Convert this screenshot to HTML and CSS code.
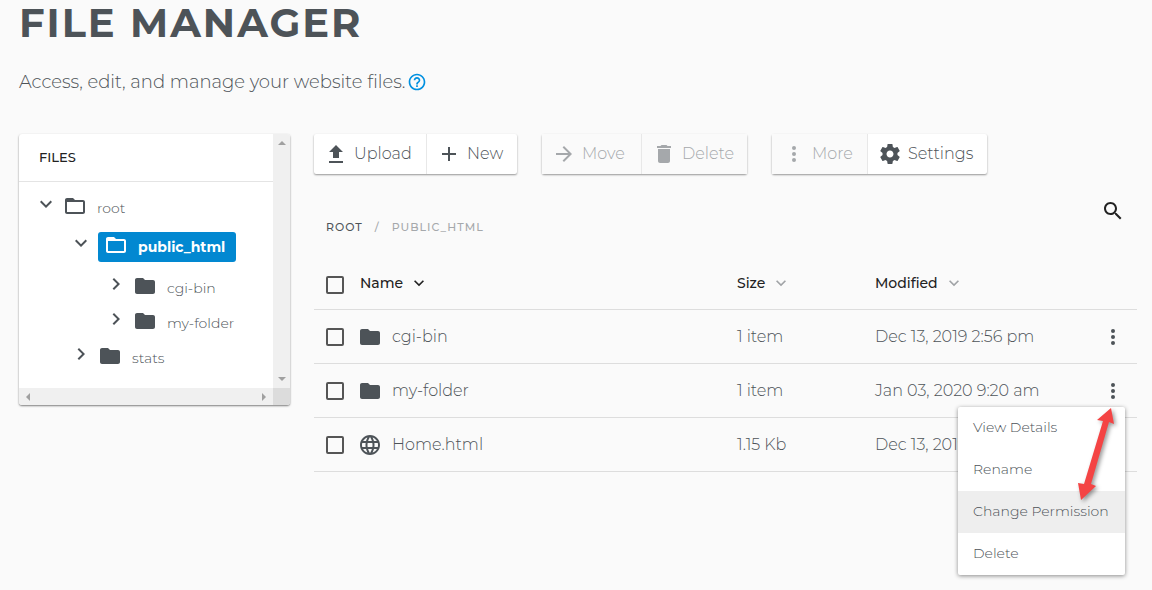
FILE: index.html
```html
<!DOCTYPE html>
<html lang="en">
<head>
<meta charset="utf-8">
<title>File Manager</title>
<link rel="stylesheet" href="styles.css">
</head>
<body>
<svg class="sprite" aria-hidden="true">
  <symbol id="folder" viewBox="0 0 24 24"><path d="M10 4H4c-1.100 0-1.990.900-1.990 2L2 18c0 1.100.9 2 2 2h16c1.100 0 2-.9 2-2V8c0-1.100-.9-2-2-2h-8l-2-2z"/></symbol>
  <symbol id="folder-open" viewBox="0 0 24 24"><path d="M20 6h-8l-2-2H4c-1.100 0-1.990.9-1.990 2L2 18c0 1.100.9 2 2 2h16c1.100 0 2-.9 2-2V8c0-1.100-.9-2-2-2zm0 12H4V8h16v10z"/></symbol>
  <symbol id="down" viewBox="0 0 24 24"><path d="M7.410 8.590 12 13.170l4.590-4.580L18 10l-6 6-6-6z"/></symbol>
  <symbol id="right" viewBox="0 0 24 24"><path d="M8.590 16.590 13.170 12 8.590 7.410 10 6l6 6-6 6z"/></symbol>
  <symbol id="dots" viewBox="0 0 24 24"><circle cx="12" cy="6" r="2"/><circle cx="12" cy="12" r="2"/><circle cx="12" cy="18" r="2"/></symbol>
</svg>
<main class="page">
  <h1 class="title">FILE MANAGER</h1>
  <p class="intro">Access, edit, and manage your website files.<a class="help" href="#" aria-label="Help"><svg class="help-icon" viewBox="0 0 24 24"><path d="M11 18h2v-2h-2v2zm1-16C6.480 2 2 6.480 2 12s4.480 10 10 10 10-4.480 10-10S17.520 2 12 2zm0 18c-4.410 0-8-3.590-8-8s3.590-8 8-8 8 3.590 8 8-3.590 8-8 8zm0-14c-2.210 0-4 1.790-4 4h2c0-1.100.9-2 2-2s2 .9 2 2c0 2-3 1.750-3 5h2c0-2.250 3-2.500 3-5 0-2.210-1.790-4-4-4z"/></svg></a></p>
  <div class="columns">
    <aside class="files">
      <div class="files-body">
        <h2 class="files-title">FILES</h2>
        <ul class="tree">
          <li class="node"><svg class="chev"><use href="#down"/></svg><a class="entry" href="#"><svg class="tree-folder"><use href="#folder-open"/></svg>root</a></li>
          <li class="node node-selected level-1"><svg class="chev"><use href="#down"/></svg><a class="entry entry-selected" href="#"><svg class="tree-folder"><use href="#folder-open"/></svg>public_html</a></li>
          <li class="node level-2"><svg class="chev"><use href="#right"/></svg><a class="entry" href="#"><svg class="tree-folder"><use href="#folder"/></svg>cgi-bin</a></li>
          <li class="node level-2"><svg class="chev"><use href="#right"/></svg><a class="entry" href="#"><svg class="tree-folder"><use href="#folder"/></svg>my-folder</a></li>
          <li class="node level-1"><svg class="chev"><use href="#right"/></svg><a class="entry" href="#"><svg class="tree-folder"><use href="#folder"/></svg>stats</a></li>
        </ul>
      </div>
      <div class="bar bar-y"><svg class="tip" viewBox="0 0 8 8"><path d="M0 6h8L4 2z"/></svg><svg class="tip" viewBox="0 0 8 8"><path d="M0 2h8L4 6z"/></svg></div>
      <div class="bar bar-x"><svg class="tip" viewBox="0 0 8 8"><path d="M6 0v8L2 4z"/></svg><svg class="tip" viewBox="0 0 8 8"><path d="M2 0v8l4-4z"/></svg></div>
      <div class="corner"></div>
    </aside>
    <section class="content">
      <div class="toolbar">
        <div class="group">
          <button class="tool tool-upload"><svg class="icon" viewBox="0 0 24 24"><path d="M9 16h6v-6h4l-7-7-7 7h4zM5 19h14v2H5z"/></svg>Upload</button>
          <button class="tool tool-new"><svg class="icon" viewBox="0 0 24 24"><path d="M19 13h-6v6h-2v-6H5v-2h6V5h2v6h6z"/></svg>New</button>
        </div>
        <div class="group">
          <button class="tool tool-move" disabled><svg class="icon" viewBox="0 0 24 24"><path d="m12 4-1.410 1.410L16.170 11H4v2h12.170l-5.580 5.590L12 20l8-8z"/></svg>Move</button>
          <button class="tool tool-delete" disabled><svg class="icon" viewBox="0 0 24 24"><path d="M6 19c0 1.100.9 2 2 2h8c1.100 0 2-.9 2-2V7H6v12zM19 4h-3.500l-1-1h-5l-1 1H5v2h14z"/></svg>Delete</button>
        </div>
        <div class="group">
          <button class="tool tool-more" disabled><svg class="icon"><use href="#dots"/></svg>More</button>
          <button class="tool tool-settings"><svg class="icon" viewBox="0 0 24 24"><path d="M19.430 12.980c.04-.32.07-.64.07-.98s-.03-.66-.07-.98l2.110-1.650c.19-.15.24-.42.12-.64l-2-3.460c-.12-.22-.39-.3-.61-.22l-2.490 1c-.52-.4-1.080-.73-1.690-.98l-.38-2.650C14.460 2.180 14.250 2 14 2h-4c-.25 0-.46.18-.49.42l-.38 2.650c-.61.25-1.170.59-1.690.98l-2.490-1c-.23-.09-.49 0-.61.22l-2 3.460c-.13.22-.07.49.12.64l2.110 1.650c-.04.32-.07.65-.07.98s.03.66.07.98l-2.110 1.650c-.19.15-.24.42-.12.64l2 3.460c.12.22.39.3.61.22l2.490-1c.52.4 1.080.73 1.690.98l.38 2.650c.03.24.24.42.49.42h4c.25 0 .46-.18.49-.42l.38-2.650c.61-.25 1.170-.59 1.690-.98l2.490 1c.23.09.49 0 .61-.22l2-3.460c.12-.22.07-.49-.12-.64l-2.110-1.650zM12 15.500c-1.930 0-3.500-1.570-3.500-3.500s1.570-3.500 3.500-3.500 3.500 1.570 3.500 3.500-1.570 3.500-3.500 3.500z"/></svg>Settings</button>
        </div>
      </div>
      <div class="path-row">
        <nav class="path"><a class="path-link" href="#">ROOT</a><span>/</span><span>PUBLIC_HTML</span></nav>
        <button class="plain search" aria-label="Search"><svg class="icon" viewBox="0 0 24 24"><path d="M15.500 14h-.79l-.28-.27C15.410 12.590 16 11.110 16 9.500 16 5.910 13.090 3 9.500 3S3 5.910 3 9.500 5.910 16 9.500 16c1.610 0 3.090-.59 4.230-1.570l.27.28v.79l5 4.990L20.490 19l-4.990-5zm-6 0C7.010 14 5 11.990 5 9.500S7.010 5 9.500 5 14 7.010 14 9.500 11.990 14 9.500 14z"/></svg></button>
      </div>
      <table class="list">
        <colgroup><col class="col-check"><col><col class="col-size"><col class="col-date"><col class="col-act"></colgroup>
        <thead>
          <tr>
            <th><input class="check" type="checkbox" aria-label="Select all"></th>
            <th><button class="plain sort">Name<svg class="sort-icon sort-active"><use href="#down"/></svg></button></th>
            <th><button class="plain sort">Size<svg class="sort-icon"><use href="#down"/></svg></button></th>
            <th><button class="plain sort">Modified<svg class="sort-icon"><use href="#down"/></svg></button></th>
            <th></th>
          </tr>
        </thead>
        <tbody>
          <tr>
            <td><input class="check" type="checkbox" aria-label="Select cgi-bin"></td>
            <td><a class="name" href="#"><svg class="icon"><use href="#folder"/></svg>cgi-bin</a></td>
            <td>1 item</td><td>Dec 13, 2019 2:56 pm</td>
            <td><button class="plain" aria-label="Actions for cgi-bin"><svg class="icon"><use href="#dots"/></svg></button></td>
          </tr>
          <tr>
            <td><input class="check" type="checkbox" aria-label="Select my-folder"></td>
            <td><a class="name" href="#"><svg class="icon"><use href="#folder"/></svg>my-folder</a></td>
            <td>1 item</td><td>Jan 03, 2020 9:20 am</td>
            <td class="menu-cell"><button class="plain" aria-label="Actions for my-folder"><svg class="icon"><use href="#dots"/></svg></button>
              <div class="menu">
                <button class="menu-item">View Details</button>
                <button class="menu-item">Rename</button>
                <button class="menu-item menu-current">Change Permission</button>
                <button class="menu-item">Delete</button>
                <svg class="arrow" viewBox="0 0 40 100" aria-hidden="true"><path d="M33 2l3 16-5-2-18 62 5 2L3 94 0 77l6 1L25 15l-6-1z"/></svg>
              </div>
            </td>
          </tr>
          <tr>
            <td><input class="check" type="checkbox" aria-label="Select Home.html"></td>
            <td><a class="name" href="#"><svg class="icon" viewBox="0 0 24 24"><path d="M11.990 2C6.470 2 2 6.480 2 12s4.470 10 9.990 10C17.520 22 22 17.520 22 12S17.520 2 11.990 2zm6.930 6h-2.950c-.32-1.250-.78-2.450-1.380-3.560 1.840.63 3.370 1.910 4.330 3.560zM12 4.040c.83 1.200 1.480 2.530 1.910 3.960h-3.820c.43-1.430 1.080-2.760 1.910-3.960zM4.260 14C4.100 13.360 4 12.690 4 12s.1-1.360.26-2h3.380c-.08.66-.14 1.320-.14 2s.06 1.340.14 2H4.260zm.82 2h2.950c.32 1.250.78 2.450 1.380 3.560-1.840-.63-3.370-1.900-4.330-3.560zm2.950-8H5.080c.96-1.660 2.490-2.930 4.330-3.560C8.810 5.550 8.350 6.750 8.030 8zM12 19.960c-.83-1.200-1.480-2.530-1.910-3.960h3.820c-.43 1.430-1.080 2.760-1.910 3.960zM14.340 14H9.660c-.09-.66-.16-1.320-.16-2s.07-1.350.16-2h4.680c.09.65.16 1.320.16 2s-.07 1.340-.16 2zm.25 5.560c.6-1.110 1.060-2.310 1.380-3.560h2.950c-.96 1.650-2.490 2.930-4.330 3.560zM16.360 14c.08-.66.14-1.320.14-2s-.06-1.340-.14-2h3.380c.16.64.26 1.310.26 2s-.1 1.360-.26 2h-3.380z"/></svg>Home.html</a></td>
            <td>1.15 Kb</td><td>Dec 13, 2019 2:56 pm</td>
            <td></td>
          </tr>
        </tbody>
      </table>
    </section>
  </div>
</main>
</body>
</html>
```
FILE: styles.css
```css
* { box-sizing: border-box; }
body {
  margin: 0;
  background: #fafafa;
  color: #4d5358;
  font: 300 16px/24px Montserrat, Inter, "Open Sans", sans-serif;
}
a { color: inherit; text-decoration: none; }
svg { fill: currentColor; flex: none; display: block; }
button { font: inherit; color: inherit; border: 0; background: none; cursor: pointer; }
.sprite { position: absolute; width: 0; height: 0; }
.page { min-height: 100vh; padding: 0 15px 16px 19px; }

.title { margin: 0; font-size: 40px; line-height: 46px; font-weight: 700; letter-spacing: 2px; }
.intro { margin: 23px 0 39px; display: flex; align-items: center; gap: 2px; font-size: 18px; line-height: 26px; }
.help { color: #0090e0; }
.help-icon { width: 20px; height: 20px; }

.columns { display: flex; align-items: flex-start; gap: 24px; }

.files {
  flex: none;
  width: 271px;
  display: grid;
  grid-template-columns: 1fr 17px;
  grid-template-rows: auto 17px;
  background: #fff;
  border-radius: 3px;
  overflow: hidden;
  box-shadow: 0 1px 2px rgba(0, 0, 0, .5);
}
.files-title {
  margin: 0;
  padding: 0 20px;
  border-bottom: 1px solid #e4e4e4;
  color: #222;
  font-size: 13px;
  line-height: 47px;
  font-weight: 500;
}
.tree { list-style: none; margin: 0; padding: 8px 0 13px 15px; font-size: 14px; }
.node { display: flex; align-items: center; gap: 5px; height: 35px; }
.node-selected { height: 45px; padding-bottom: 1px; }
.level-1 { padding-left: 35px; }
.level-2 { padding-left: 70px; }
.chev { width: 24px; height: 24px; margin-bottom: 8px; }
.entry { display: flex; align-items: center; gap: 10px; }
.tree-folder { width: 24px; height: 24px; margin-bottom: 4px; }
.entry-selected {
  height: 30px;
  padding: 0 11px 0 6px;
  border-radius: 3px;
  background: #0288d1;
  color: #fff;
  font-weight: 700;
}
.bar { display: flex; justify-content: space-between; align-items: center; background: #f0f0f0; color: #a0a0a0; padding: 5px; }
.bar-y { flex-direction: column; }
.tip { width: 8px; height: 8px; }
.corner { background: #dcdcdc; }

.content { flex: 1; min-width: 0; }
.toolbar { display: flex; gap: 25px; }
.group { display: flex; border-radius: 2px; background: #fff; box-shadow: 0 1px 2px rgba(0, 0, 0, .4); }
.tool { display: flex; align-items: center; gap: 6px; height: 40px; padding: 0 0 0 10px; white-space: nowrap; }
.tool + .tool { border-left: 1px solid #e8e8e8; }
.tool:disabled { background: #fafafa; color: #a5a8ab; }
.tool-upload { width: 112px; }
.tool-new { width: 91px; }
.tool-move { width: 99px; }
.tool-delete { width: 106px; }
.tool-more { width: 95px; }
.tool-settings { width: 120px; }
.icon { width: 24px; height: 24px; }

.path-row { display: flex; justify-content: space-between; padding: 25px 12px 0; }
.path { display: flex; gap: 12px; padding-top: 16px; font-size: 11px; font-weight: 500; letter-spacing: 1px; color: #a5a8ab; }
.path-link { color: #4d5358; }
.plain { display: flex; padding: 0; }
.search { height: 24px; color: #222; }

.list { width: 100%; margin-top: 16px; border-collapse: collapse; table-layout: fixed; }
.col-check { width: 44px; }
.col-size { width: 138px; }
.col-date { width: 226px; }
.col-act { width: 36px; }
.list th, .list td { height: 54px; padding: 2px 0 0; border-bottom: 1px solid #ddd; text-align: left; white-space: nowrap; }
.sort { align-items: center; gap: 6px; margin-left: 2px; color: #222; font-size: 14px; font-weight: 500; }
.list th + th + th .sort { margin-left: 0; }
.sort-icon { width: 20px; height: 20px; color: #a0a3a6; }
.sort-active { color: #222; }
.name { display: flex; align-items: center; gap: 10px; }
.check {
  appearance: none;
  display: block;
  width: 18px;
  height: 18px;
  margin: 0 0 0 12px;
  border: 2px solid #555;
  border-radius: 2px;
}
.list th .check { margin-top: 4px; }
.menu-cell { position: relative; }
.menu {
  position: absolute;
  z-index: 1;
  top: 43px;
  right: 12px;
  width: 167px;
  background: #fff;
  border-radius: 2px;
  box-shadow: 0 1px 4px rgba(0, 0, 0, .45);
}
.menu-item { display: block; width: 100%; height: 42px; padding: 0 15px 2px; text-align: left; font-size: 14px; white-space: nowrap; }
.menu-current { background: #eee; }
.arrow { position: absolute; top: -1px; right: 7px; width: 40px; height: 100px; fill: #f44444; filter: drop-shadow(2px 2px 2px rgba(0, 0, 0, .4)); }
```
